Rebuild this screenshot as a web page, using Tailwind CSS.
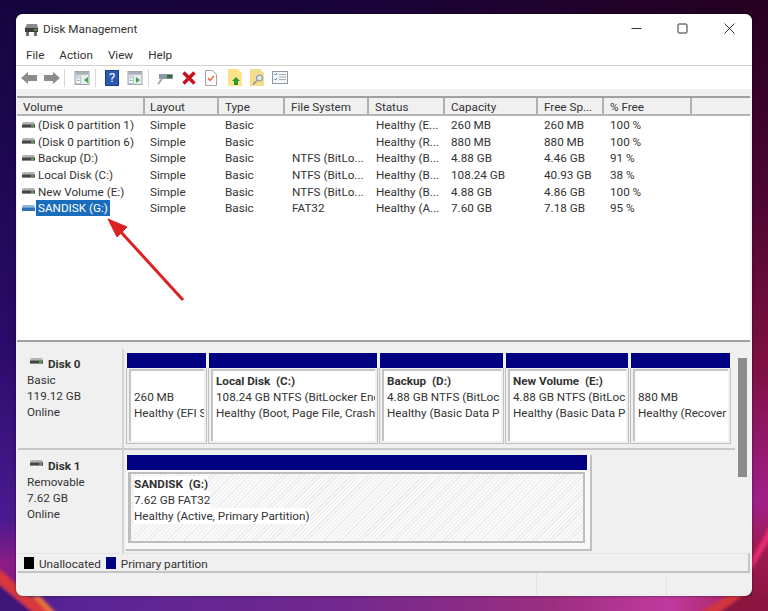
<!DOCTYPE html>
<html lang="en">
<head>
  <meta charset="UTF-8" />
  <title>Disk Management</title>
  <script src="https://cdn.jsdelivr.net/npm/@tailwindcss/browser@4"></script>
</head>
<body class="relative w-[768px] h-[611px] overflow-hidden bg-[#14053f] font-['Roboto',sans-serif] text-[11.7px] leading-[16px] text-[#333]">

  <!-- Wallpaper -->
  <svg class="absolute inset-0" width="768" height="611" viewBox="0 0 768 611">
    <defs>
      <linearGradient id="wall" x1="0" y1="0" x2="1" y2="0">
        <stop offset="0" stop-color="#14053f"/>
        <stop offset="0.5" stop-color="#1a0338"/>
        <stop offset="1" stop-color="#260020"/>
      </linearGradient>
      <linearGradient id="left" x1="0" y1="0" x2="0" y2="1">
        <stop offset="0" stop-color="#14053f"/>
        <stop offset="0.55" stop-color="#2a0a68"/>
        <stop offset="0.85" stop-color="#4a1a90"/>
        <stop offset="0.92" stop-color="#8a1c88"/>
        <stop offset="1" stop-color="#8a1c88"/>
      </linearGradient>
      <linearGradient id="right" x1="0" y1="0" x2="0" y2="1">
        <stop offset="0" stop-color="#260020"/>
        <stop offset="0.3" stop-color="#4a0530"/>
        <stop offset="0.6" stop-color="#7e1042"/>
        <stop offset="0.82" stop-color="#a0208a"/>
        <stop offset="0.9" stop-color="#a01a50"/>
        <stop offset="1" stop-color="#8a1540"/>
      </linearGradient>
      <linearGradient id="bottom" x1="0" y1="0" x2="1" y2="0">
        <stop offset="0" stop-color="#4a1a8c"/>
        <stop offset="0.1" stop-color="#5a2496"/>
        <stop offset="0.45" stop-color="#73288e"/>
        <stop offset="0.72" stop-color="#9c2e80"/>
        <stop offset="0.87" stop-color="#c03a9e"/>
        <stop offset="1" stop-color="#a01a50"/>
      </linearGradient>
      <filter id="soft"><feGaussianBlur stdDeviation="1.5"/></filter>
    </defs>
    <rect width="768" height="611" fill="url(#wall)"/>
    <rect width="16" height="611" fill="url(#left)"/>
    <rect x="752" width="16" height="611" fill="url(#right)"/>
    <rect y="596" width="768" height="15" fill="url(#bottom)"/>
    <g filter="url(#soft)">
      <polygon points="-4,566 30,596 58,615 36,615 -4,582" fill="#d8383c"/>
      <polygon points="-4,582 36,615 -4,615" fill="#3c1478"/>
      <polygon points="32,596 40,596 58,615 50,615" fill="#e8703a"/>
      <polygon points="696,615 730,594 745,594 716,615" fill="#d03440"/>
      <polygon points="716,615 745,594 772,594 772,615" fill="#8a1540"/>
      <polygon points="750,562 772,522 772,536 750,572" fill="#e62a70"/>
    </g>
  </svg>

  <svg class="hidden">
    <symbol id="drive" viewBox="0 0 13 7">
      <rect x="0.5" y="0" width="12" height="2.4" fill="#b4b4b4"/>
      <rect x="0" y="2.4" width="13" height="3.2" fill="#444"/>
      <rect x="9" y="3.2" width="3" height="1.6" fill="#58b848"/>
    </symbol>
    <symbol id="panel" viewBox="0 0 16 15">
      <rect x="0.5" y="0.5" width="15" height="14" fill="#e8ecef" stroke="#9a9fa6"/>
      <rect x="1" y="1" width="14" height="3" fill="#aab0b6"/>
      <rect x="1.5" y="5.5" width="5" height="8" fill="#fff" stroke="#b4c0c8"/>
      <rect x="2.5" y="7" width="3" height="1" fill="#8aa0b0"/>
      <rect x="2.5" y="9.5" width="3" height="1" fill="#8aa0b0"/>
    </symbol>
  </svg>

  <!-- Window -->
  <div class="absolute left-[16px] top-[14px] w-[736px] h-[582px] bg-[#f0f0f0] rounded-[7px] overflow-hidden flex flex-col shadow-[0_0_3px_rgba(0,0,0,0.5)]">

    <!-- Title bar -->
    <div class="h-[30px] bg-white flex items-center shrink-0">
      <svg class="ml-[8px] mr-[4px]" width="15" height="15" viewBox="0 0 15 15">
        <path d="M3 2h10l1 4H1z" fill="#8a8a8a"/>
        <rect x="1" y="6" width="13" height="4" fill="#3e3e3e"/>
        <rect x="10" y="7" width="3" height="1.5" fill="#62b84c"/>
        <rect x="2" y="10" width="3" height="4" fill="#6e6e6e"/>
        <rect x="10" y="10" width="3" height="4" fill="#6e6e6e"/>
      </svg>
      <span>Disk Management</span>
      <div class="ml-auto flex -mt-[1px]">
        <svg class="mr-[35px]" width="11" height="11" viewBox="0 0 11 11"><path d="M0.5 5.5h10" stroke="#333" fill="none"/></svg>
        <svg class="mr-[36px]" width="11" height="11" viewBox="0 0 11 11"><rect x="1" y="1" width="9" height="9" rx="1" stroke="#333" fill="none"/></svg>
        <svg class="mr-[17px]" width="11" height="11" viewBox="0 0 11 11"><path d="M0.5 0.5l10 10M10.5 0.5l-10 10" stroke="#333" fill="none"/></svg>
      </div>
    </div>

    <!-- Menu -->
    <div class="h-[22px] bg-white border-b border-[#cfcfcf] flex items-center pl-[10px] gap-[15px] shrink-0">
      <span>File</span><span>Action</span><span>View</span><span>Help</span>
    </div>

    <!-- Toolbar -->
    <div class="h-[23px] bg-white flex items-center pl-[5px] shrink-0">
      <svg width="16" height="14" viewBox="0 0 16 14"><path d="M0 7l7-6v3h9v6H7v3z" fill="#8c8c8c"/></svg>
      <svg class="ml-[7px]" width="16" height="14" viewBox="0 0 16 14"><path d="M16 7L9 1v3H0v6h9v3z" fill="#8c8c8c"/></svg>
      <div class="ml-[4px] w-px h-[18px] bg-[#d8d8d8]"></div>
      <svg class="ml-[9px]" width="16" height="14"><use href="#panel"/><path d="M14 6v6l-4-3z" fill="#3aa84a"/></svg>
      <div class="ml-[5px] w-px h-[18px] bg-[#d8d8d8]"></div>
      <div class="ml-[9px] w-[14px] h-[16px] bg-[#2a5bb0] border border-[#1a3c80] text-white text-[13px] leading-[14px] text-center">?</div>
      <svg class="ml-[8px]" width="16" height="14"><use href="#panel"/><path d="M9 6v6l4-3z" fill="#3aa84a"/></svg>
      <div class="ml-[5px] w-px h-[18px] bg-[#d8d8d8]"></div>
      <svg class="ml-[8px]" width="16" height="16" viewBox="0 0 16 16">
        <rect x="2" y="4" width="14" height="5" fill="#8a9aa4"/>
        <rect x="10" y="5" width="5" height="3" fill="#2c6a30"/>
        <path d="M5 9L1 14" stroke="#a0a8b0" stroke-width="2"/>
      </svg>
      <svg class="ml-[9px]" width="14" height="14" viewBox="0 0 14 14"><path d="M1.5 1.5l11 11M12.5 1.5l-11 11" stroke="#c8101c" stroke-width="3.4" fill="none"/></svg>
      <svg class="ml-[9px]" width="12" height="16" viewBox="0 0 12 16">
        <path d="M0.5 0.5h7l4 4v11h-11z" fill="#fff" stroke="#a4a4a4"/>
        <path d="M3 8l2 2.5L9 6" stroke="#e0603c" stroke-width="1.3" fill="none"/>
      </svg>
      <svg class="ml-[11px]" width="14" height="17" viewBox="0 0 14 17">
        <path d="M0 0h10l4 4v13H0z" fill="#fce38a"/>
        <path d="M8 8l4 4h-2v4H6v-4H4z" fill="#2a9a30"/>
      </svg>
      <svg class="ml-[8px]" width="14" height="17" viewBox="0 0 14 17">
        <path d="M0 0h10l4 4v13H0z" fill="#f6dc8e"/>
        <circle cx="9.5" cy="9" r="3" fill="#d8e8f0" stroke="#7a8c98"/>
        <path d="M7 11.5l-4 4" stroke="#9a9a8a" stroke-width="1.6"/>
      </svg>
      <svg class="ml-[8px]" width="16" height="13" viewBox="0 0 16 13">
        <rect x="0.5" y="0.5" width="15" height="12" fill="#f4f6f8" stroke="#8e98a2"/>
        <path d="M2.5 3l1 1 1.5-2M2.5 8l1 1 1.5-2" stroke="#3a78c0" fill="none"/>
        <path d="M7 3.5h7M7 6h7M7 8.5h7" stroke="#a8b0b8"/>
      </svg>
    </div>

    <!-- Strip above the list -->
    <div class="h-[7px] bg-[#f0f0f0] shrink-0"></div>

    <!-- Volume list -->
    <div class="ml-px mr-[2px] h-[246px] bg-white border-t-2 border-b-2 border-[#a0a0a0] shrink-0 flex flex-col">
      <div class="flex h-[16px] items-end bg-[#f0f0f0] border-b-2 border-[#b4b4b4] box-content shrink-0">
        <div class="w-[128px] h-[16px] pl-[6px] pt-px border-r-2 border-[#b0b0b0]">Volume</div>
        <div class="w-[74px] h-[16px] pl-[5px] pt-px border-r-2 border-[#b0b0b0]">Layout</div>
        <div class="w-[66px] h-[16px] pl-[6px] pt-px border-r-2 border-[#b0b0b0]">Type</div>
        <div class="w-[84px] h-[16px] pl-[6px] pt-px border-r-2 border-[#b0b0b0]">File System</div>
        <div class="w-[76px] h-[16px] pl-[6px] pt-px border-r-2 border-[#b0b0b0]">Status</div>
        <div class="w-[93px] h-[16px] pl-[6px] pt-px border-r-2 border-[#b0b0b0]">Capacity</div>
        <div class="w-[66px] h-[16px] pl-[6px] pt-px border-r-2 border-[#b0b0b0]">Free Sp...</div>
        <div class="w-[88px] h-[16px] pl-[6px] pt-px border-r-2 border-[#b0b0b0]">% Free</div>
      </div>
      <div class="pt-[1px]">
        <div class="flex h-[16.6px] items-center">
          <div class="w-[128px] flex items-center pl-[5px]"><svg class="mr-[3px]" width="13" height="7"><use href="#drive"/></svg><span>(Disk 0 partition 1)</span></div>
          <div class="w-[74px] pl-[5px]">Simple</div><div class="w-[66px] pl-[6px]">Basic</div><div class="w-[84px] pl-[7px]"></div><div class="w-[76px] pl-[7px]">Healthy (E...</div><div class="w-[93px] pl-[6px]">260 MB</div><div class="w-[66px] pl-[6px]">260 MB</div><div class="w-[88px] pl-[6px]">100 %</div>
        </div>
        <div class="flex h-[16.6px] items-center">
          <div class="w-[128px] flex items-center pl-[5px]"><svg class="mr-[3px]" width="13" height="7"><use href="#drive"/></svg><span>(Disk 0 partition 6)</span></div>
          <div class="w-[74px] pl-[5px]">Simple</div><div class="w-[66px] pl-[6px]">Basic</div><div class="w-[84px] pl-[7px]"></div><div class="w-[76px] pl-[7px]">Healthy (R...</div><div class="w-[93px] pl-[6px]">880 MB</div><div class="w-[66px] pl-[6px]">880 MB</div><div class="w-[88px] pl-[6px]">100 %</div>
        </div>
        <div class="flex h-[16.6px] items-center">
          <div class="w-[128px] flex items-center pl-[5px]"><svg class="mr-[3px]" width="13" height="7"><use href="#drive"/></svg><span>Backup (D:)</span></div>
          <div class="w-[74px] pl-[5px]">Simple</div><div class="w-[66px] pl-[6px]">Basic</div><div class="w-[84px] pl-[7px]">NTFS (BitLo...</div><div class="w-[76px] pl-[7px]">Healthy (B...</div><div class="w-[93px] pl-[6px]">4.88 GB</div><div class="w-[66px] pl-[6px]">4.46 GB</div><div class="w-[88px] pl-[6px]">91 %</div>
        </div>
        <div class="flex h-[16.6px] items-center">
          <div class="w-[128px] flex items-center pl-[5px]"><svg class="mr-[3px]" width="13" height="7"><use href="#drive"/></svg><span>Local Disk (C:)</span></div>
          <div class="w-[74px] pl-[5px]">Simple</div><div class="w-[66px] pl-[6px]">Basic</div><div class="w-[84px] pl-[7px]">NTFS (BitLo...</div><div class="w-[76px] pl-[7px]">Healthy (B...</div><div class="w-[93px] pl-[6px]">108.24 GB</div><div class="w-[66px] pl-[6px]">40.93 GB</div><div class="w-[88px] pl-[6px]">38 %</div>
        </div>
        <div class="flex h-[16.6px] items-center">
          <div class="w-[128px] flex items-center pl-[5px]"><svg class="mr-[3px]" width="13" height="7"><use href="#drive"/></svg><span>New Volume (E:)</span></div>
          <div class="w-[74px] pl-[5px]">Simple</div><div class="w-[66px] pl-[6px]">Basic</div><div class="w-[84px] pl-[7px]">NTFS (BitLo...</div><div class="w-[76px] pl-[7px]">Healthy (B...</div><div class="w-[93px] pl-[6px]">4.88 GB</div><div class="w-[66px] pl-[6px]">4.86 GB</div><div class="w-[88px] pl-[6px]">100 %</div>
        </div>
        <div class="flex h-[16.6px] items-center">
          <div class="w-[128px] flex items-center pl-[5px]"><svg class="mr-[1px]" width="13" height="7" viewBox="0 0 13 7"><rect x="0.5" width="12" height="2.4" fill="#8ab4dc"/><rect y="2.4" width="13" height="3.6" fill="#2f6fb4"/></svg><span class="bg-[#1a6cbc] text-white px-[2px] h-[16px]">SANDISK (G:)</span></div>
          <div class="w-[74px] pl-[5px]">Simple</div><div class="w-[66px] pl-[6px]">Basic</div><div class="w-[84px] pl-[7px]">FAT32</div><div class="w-[76px] pl-[7px]">Healthy (A...</div><div class="w-[93px] pl-[6px]">7.60 GB</div><div class="w-[66px] pl-[6px]">7.18 GB</div><div class="w-[88px] pl-[6px]">95 %</div>
        </div>
      </div>
    </div>

    <!-- Disk pane -->
    <div class="flex mt-[7px] ml-[2px] mr-[3px] h-[204px] shrink-0">
      <div class="w-[717px] flex flex-col">

        <!-- Disk 0 -->
        <div class="flex h-[101px] border-b-2 border-[#c8c8c8]">
          <div class="w-[106px] pl-[9px] pt-[7px] border-r-2 border-[#d4d4d4]">
            <div class="flex items-center h-[16px] font-bold">
              <svg class="ml-[3px] mr-[5px] -mt-[5px]" width="13" height="7"><use href="#drive"/></svg>Disk 0
            </div>
            <div>Basic</div><div>119.12 GB</div><div>Online</div>
          </div>
          <div class="flex-1 pl-[2px] pt-[4px] flex gap-[1px]">
            <div class="w-[81px] h-[91px] flex flex-col">
              <div class="h-[15px] mx-px bg-[#000080] shrink-0"></div>
              <div class="h-[76px] border border-t-0 border-[#c0c0c0] p-[2px] pt-[1px]">
                <div class="h-[72px] bg-white border-l-2 border-t-2 border-[#c4c4c4] pl-[3px] pt-[2px] overflow-hidden whitespace-nowrap">
                  <div class="h-[16px]"></div><div>260 MB</div><div>Healthy (EFI S</div>
                </div>
              </div>
            </div>
            <div class="w-[170px] h-[91px] flex flex-col">
              <div class="h-[15px] mx-px bg-[#000080] shrink-0"></div>
              <div class="h-[76px] border border-t-0 border-[#c0c0c0] p-[2px] pt-[1px]">
                <div class="h-[72px] bg-white border-l-2 border-t-2 border-[#c4c4c4] pl-[3px] pt-[2px] overflow-hidden whitespace-nowrap">
                  <div class="font-bold h-[16px]">Local Disk&nbsp; (C:)</div><div>108.24 GB NTFS (BitLocker Enc</div><div>Healthy (Boot, Page File, Crash</div>
                </div>
              </div>
            </div>
            <div class="w-[125px] h-[91px] flex flex-col">
              <div class="h-[15px] mx-px bg-[#000080] shrink-0"></div>
              <div class="h-[76px] border border-t-0 border-[#c0c0c0] p-[2px] pt-[1px]">
                <div class="h-[72px] bg-white border-l-2 border-t-2 border-[#c4c4c4] pl-[3px] pt-[2px] overflow-hidden whitespace-nowrap">
                  <div class="font-bold h-[16px]">Backup&nbsp; (D:)</div><div>4.88 GB NTFS (BitLoc</div><div>Healthy (Basic Data P</div>
                </div>
              </div>
            </div>
            <div class="w-[124px] h-[91px] flex flex-col">
              <div class="h-[15px] mx-px bg-[#000080] shrink-0"></div>
              <div class="h-[76px] border border-t-0 border-[#c0c0c0] p-[2px] pt-[1px]">
                <div class="h-[72px] bg-white border-l-2 border-t-2 border-[#c4c4c4] pl-[3px] pt-[2px] overflow-hidden whitespace-nowrap">
                  <div class="font-bold h-[16px]">New Volume&nbsp; (E:)</div><div>4.88 GB NTFS (BitLoc</div><div>Healthy (Basic Data P</div>
                </div>
              </div>
            </div>
            <div class="w-[101px] h-[91px] flex flex-col">
              <div class="h-[15px] mx-px bg-[#000080] shrink-0"></div>
              <div class="h-[76px] border border-t-0 border-[#c0c0c0] p-[2px] pt-[1px]">
                <div class="h-[72px] bg-white border-l-2 border-t-2 border-[#c4c4c4] pl-[3px] pt-[2px] overflow-hidden whitespace-nowrap">
                  <div class="h-[16px]"></div><div>880 MB</div><div>Healthy (Recover</div>
                </div>
              </div>
            </div>
          </div>
        </div>

        <!-- Disk 1 -->
        <div class="flex h-[103px]">
          <div class="w-[106px] pl-[9px] pt-[8px] border-r-2 border-[#d4d4d4]">
            <div class="flex items-center h-[16px] font-bold">
              <svg class="ml-[3px] mr-[5px] -mt-[5px]" width="13" height="7"><use href="#drive"/></svg>Disk 1
            </div>
            <div>Removable</div><div>7.62 GB</div><div>Online</div>
          </div>
          <div class="pl-[2px] pt-[5px]">
            <div class="w-[466px] h-[96px] flex flex-col border-r-2 border-b-2 border-[#c0c0c0] bg-[#f8f8f8]">
              <div class="h-[15px] ml-px mr-[3px] bg-[#000080] shrink-0"></div>
              <div class="mt-[2px] ml-[2px] mr-[5px] h-[71px] border-l-[3px] border-t-[2px] border-r-2 border-b-2 border-[#bdbdbd] bg-[repeating-linear-gradient(135deg,#ebebeb_0,#ebebeb_1px,#fafafa_1px,#fafafa_3px)] pl-[3px] pt-[2px]">
                <div class="font-bold bg-white w-fit h-[16px]">SANDISK&nbsp; (G:)</div>
                <div class="bg-white w-fit">7.62 GB FAT32</div>
                <div class="bg-white w-fit">Healthy (Active, Primary Partition)</div>
              </div>
            </div>
          </div>
        </div>
      </div>

      <!-- Scrollbar -->
      <div class="ml-[3px] w-[9px] pt-[9px]"><div class="h-[119px] bg-[#8c8c8c]"></div></div>
    </div>

    <!-- Legend -->
    <div class="ml-[2px] mr-[2px] h-[20px] border-b-2 border-r-2 border-[#c4c4c4] border-t border-t-[#e4e4e4] flex items-center pl-[6px] shrink-0">
      <div class="w-[10px] h-[12px] bg-black"></div>
      <span class="ml-[5px] mt-[2px]">Unallocated</span>
      <div class="ml-[5px] w-[10px] h-[12px] bg-[#000080]"></div>
      <span class="ml-[5px] mt-[2px]">Primary partition</span>
    </div>

    <!-- Status bar -->
    <div class="flex-1 flex pl-[520px]">
      <div class="w-[131px] border-l border-[#e0e0e0] border-r my-[1px]"></div>
    </div>
  </div>

  <!-- Annotation arrow -->
  <svg class="absolute left-0 top-0 pointer-events-none" width="768" height="611" viewBox="0 0 768 611">
    <path d="M183 300L120 231" stroke="#dd2020" stroke-width="3" fill="none"/>
    <path d="M108 219L127 227L117 237z" fill="#dd2020" stroke="#dd2020" stroke-width="1"/>
  </svg>
</body>
</html>
